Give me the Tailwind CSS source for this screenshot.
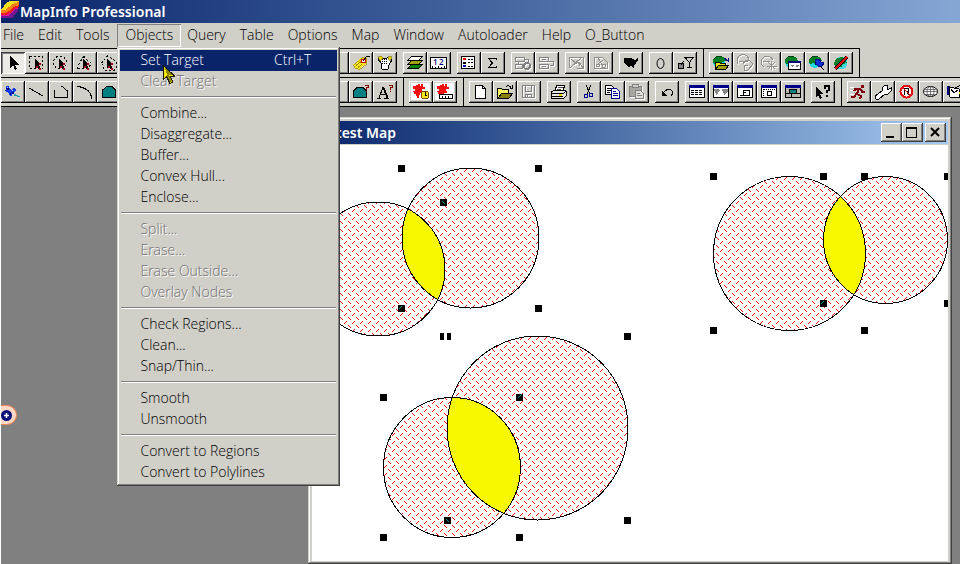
<!DOCTYPE html>
<html lang="en">
<head>
<meta charset="utf-8">
<title>MapInfo Professional</title>
<script src="https://cdn.jsdelivr.net/npm/@tailwindcss/browser@4"></script>
</head>
<body class="min-h-screen flex flex-col overflow-hidden border-l border-white bg-[#808080] font-['Open_Sans','Noto_Sans',sans-serif] text-[14px] text-black">

<header class="h-[23px] shrink-0 flex items-center gap-px bg-linear-to-r from-[#0a246a] to-[#86a6d4] text-white">
  <svg class="w-[18px] h-[18px] mb-1" viewBox="0 0 18 18" shape-rendering="crispEdges" aria-hidden="true">
    <path d="M0 9l3-3 3-4 4-2h8l-1 9-3 3-2 4H0z" fill="#e0109c"/>
    <path d="M0 8l3-3 3-4 4-1h8v2l-6 1-4 4-4 3H0z" fill="#f0e020"/>
    <path d="M0 9h4l4-3 3-3 7-2v3l-6 2-4 4-4 2H0z" fill="#f88010"/>
    <path d="M0 12h4l4-2 4-4 6-2v2l-5 2-4 4-4 2H0z" fill="#e81820"/>
    <path d="M0 15h6l3-1 4-5 5-2-1 3-3 3-2 4H0z" fill="#701890"/>
  </svg>
  <h1 class="font-['Noto_Sans',sans-serif] font-semibold leading-5">MapInfo Professional</h1>
</header>

<nav class="relative z-20 h-[25px] shrink-0 flex items-center gap-[14px] pl-[2px] bg-[#d0cfc8] font-light leading-5" aria-label="Main menu">
  <button class="pb-[2px]">File</button>
  <button class="pb-[2px]">Edit</button>
  <button class="pb-[2px]">Tools</button>
  <div class="relative -ml-[6px] -mr-2">
    <button class="h-[23px] px-2 pb-[2px] shadow-[inset_1px_1px_0_#808080,inset_-1px_-1px_0_#fff]" aria-haspopup="menu" aria-expanded="true">Objects</button>
    <div id="menu" role="menu" class="absolute left-0 top-[23px] w-[223px] p-[3px] bg-[#d0cfc8] shadow-[inset_-1px_-1px_0_#404040,inset_1px_1px_0_#d0cfc8,inset_-2px_-2px_0_#808080,inset_2px_2px_0_#fff] flex flex-col"></div>
    <svg class="absolute left-[46px] top-[41px] w-[12px] h-[20px]" viewBox="0 0 12 20" shape-rendering="crispEdges" aria-hidden="true">
      <path d="M.5 .5v14l3-3 3.500 7 3-1.500-3.500-6h5z" fill="#e8e010" stroke="#201c00"/>
      <path d="M2 3l7 7H6l3 6-2 1-3-6z" fill="#908800"/>
      <path d="M2 4v7l2-2z" fill="#f8f000"/>
    </svg>
  </div>
  <button class="pb-[2px]">Query</button>
  <button class="pb-[2px]">Table</button>
  <button class="pb-[2px]">Options</button>
  <button class="pb-[2px]">Map</button>
  <button class="pb-[2px]">Window</button>
  <button class="pb-[2px]">Autoloader</button>
  <button class="pb-[2px]">Help</button>
  <button class="pb-[2px]">O_Button</button>
</nav>

<section id="toolbars" class="shrink-0 bg-[#d0cfc8] border-b border-black" aria-label="Toolbars"></section>

<main class="relative flex-1 flex pt-[10px] pl-[307px] pr-2">
  <button class="absolute left-0 top-[298px] w-4 h-5 rounded-r-full border border-l-0 border-[#f08850] bg-[#fcd8c8] flex items-center" aria-label="Expand">
    <svg class="w-[11px] h-[11px]" viewBox="0 0 11 11" aria-hidden="true"><circle cx="5.500" cy="5.500" r="5.500" fill="#081078"/><path d="M3 5.500h5M5.500 3v5" stroke="#fff" stroke-width="1.500"/></svg>
  </button>

  <section class="flex-1 min-w-0 flex flex-col p-1 pb-[3px] bg-[#d0cfc8] shadow-[inset_-1px_-1px_0_#404040,inset_1px_1px_0_#d0cfc8,inset_-2px_-2px_0_#808080,inset_2px_2px_0_#fff]">
    <div class="h-[23px] shrink-0 flex items-center pl-6 pr-[2px] bg-linear-to-r from-[#0a246a] to-[#a6caf0] text-white">
      <h2 class="flex-1 font-['Noto_Sans',sans-serif] font-semibold leading-5">test Map</h2>
      <button class="w-[21px] h-[19px] bg-[#d0cfc8] shadow-[inset_-1px_-1px_0_#404040,inset_1px_1px_0_#fff,inset_-2px_-2px_0_#808080]" aria-label="Minimize"><svg class="w-[21px] h-[19px]" viewBox="0 0 21 19"><path d="M5 13h8v2H5z"/></svg></button>
      <button class="w-[21px] h-[19px] bg-[#d0cfc8] shadow-[inset_-1px_-1px_0_#404040,inset_1px_1px_0_#fff,inset_-2px_-2px_0_#808080]" aria-label="Maximize"><svg class="w-[21px] h-[19px]" viewBox="0 0 21 19"><path d="M4 4h11v11H4zM5 6v8h9V6z" fill-rule="evenodd"/></svg></button>
      <button class="ml-[2px] w-[21px] h-[19px] bg-[#d0cfc8] shadow-[inset_-1px_-1px_0_#404040,inset_1px_1px_0_#fff,inset_-2px_-2px_0_#808080]" aria-label="Close"><svg class="w-[21px] h-[19px]" viewBox="0 0 21 19"><path d="M6 5l8 8M14 5l-8 8" stroke="#000" stroke-width="2"/></svg></button>
    </div>
    <div class="mt-px flex-1 relative overflow-hidden bg-white">
      <svg class="absolute left-0 top-0 w-[636px] h-[416px]" viewBox="312 145 636 416" shape-rendering="crispEdges" role="img" aria-label="Map with three pairs of overlapping regions">
        <defs>
          <pattern id="hatch" width="8" height="8" patternUnits="userSpaceOnUse">
            <path d="M0 3h1v1h-1zM1 2h1v1h-1zM2 1h1v1h-1zM4 5h1v1h-1zM5 6h1v1h-1zM6 7h1v1h-1z" fill="#e00808"/>
          </pattern>
          <clipPath id="c1"><circle cx="378" cy="269" r="67"/></clipPath>
          <clipPath id="c4"><ellipse cx="452" cy="467.500" rx="68.500" ry="70"/></clipPath>
          <clipPath id="c5"><ellipse cx="789.500" cy="253.500" rx="76" ry="77"/></clipPath>
        </defs>
        <g fill="url(#hatch)">
          <circle cx="378" cy="269" r="67"/>
          <ellipse cx="470.500" cy="238" rx="68.500" ry="70"/>
          <ellipse cx="537.500" cy="428" rx="90.500" ry="92"/>
          <ellipse cx="452" cy="467.500" rx="68.500" ry="70"/>
          <ellipse cx="789.500" cy="253.500" rx="76" ry="77"/>
          <ellipse cx="885.500" cy="240" rx="62" ry="63.500"/>
        </g>
        <g fill="#f8f800">
          <ellipse cx="470.500" cy="238" rx="68.500" ry="70" clip-path="url(#c1)"/>
          <ellipse cx="537.500" cy="428" rx="90.500" ry="92" clip-path="url(#c4)"/>
          <ellipse cx="885.500" cy="240" rx="62" ry="63.500" clip-path="url(#c5)"/>
        </g>
        <g fill="none" stroke="#000">
          <circle cx="378" cy="269" r="67"/>
          <ellipse cx="470.500" cy="238" rx="68.500" ry="70"/>
          <ellipse cx="537.500" cy="428" rx="90.500" ry="92"/>
          <ellipse cx="452" cy="467.500" rx="68.500" ry="70"/>
          <ellipse cx="789.500" cy="253.500" rx="76" ry="77"/>
          <ellipse cx="885.500" cy="240" rx="62" ry="63.500"/>
        </g>
        <path d="M398 165h7v7h-7zM535 165h7v7h-7zM440 199h7v7h-7zM398 305h7v7h-7zM535 305h7v7h-7zM440 333h4v7h-4zM447 333h4v7h-4zM624 333h7v7h-7zM380 394h7v7h-7zM516 394h7v7h-7zM444 517h7v7h-7zM624 517h7v7h-7zM380 534h7v7h-7zM516 534h7v7h-7zM710 173h7v7h-7zM820 173h7v7h-7zM861 173h7v7h-7zM944 173h7v7h-7zM820 300h7v7h-7zM710 327h7v7h-7zM861 327h7v7h-7zM944 300h7v7h-7z"/>
        <path d="M442 201l3 3M402 306l-3 3M518 398l4-4M446 519l3 3M821 304l3-3" stroke="#10c8c8" stroke-width=".7"/>
      </svg>
    </div>
  </section>
</main>

<script>
const menu = [
  ['Set Target', 'active', 'Ctrl+T'], ['Clear Target', 'off'], null,
  ['Combine...'], ['Disaggregate...'], ['Buffer...'], ['Convex Hull...'], ['Enclose...'], null,
  ['Split...', 'off'], ['Erase...', 'off'], ['Erase Outside...', 'off'], ['Overlay Nodes', 'off'], null,
  ['Check Regions...'], ['Clean...'], ['Snap/Thin...'], null,
  ['Smooth'], ['Unsmooth'], null,
  ['Convert to Regions'], ['Convert to Polylines']
];
const look = {
  active: 'bg-[#0a246a] text-white',
  off: 'text-[#707070] [text-shadow:1px_1px_0_#fff]'
};
document.getElementById('menu').innerHTML = menu.map(m => m
  ? `<button role="menuitem" ${m[1] === 'off' ? 'disabled' : ''} class="h-[21px] flex items-center justify-between pl-5 pr-[26px] pb-[2px] whitespace-nowrap ${look[m[1]] || ''}"><span>${m[0]}</span>${m[2] ? `<span>${m[2]}</span>` : ''}</button>`
  : '<div role="separator" class="my-1 mx-px h-[3px] border-t border-[#808080] shadow-[inset_0_1px_0_#fff]"></div>').join('');

const cur = '<path d="M8 5v9l2-2 2 4 2-1-2-4h3z"/><path d="M9 12h2v2H9zM12 9h2v2h-2zM12 14h2v2h-2z" fill="#a00010"/>';
const dash = d => `<path d="${d}" fill="none" stroke="#000" stroke-dasharray="2 2"/>`;
const win = '<path d="M2.500 2.500h15v12h-15z" fill="#fff" stroke="#000"/><path d="M2 2h16v3H2z" fill="#000088"/>';
const globe = '<circle cx="8" cy="8" r="6" fill="#20d8e0"/><path d="M3 4l5-2 5 1 2 4-4 1-2 4-3-3-3 1-1-3z" fill="#008020"/><path d="M3 5l3-3h5" stroke="#004010" fill="none"/>';
const splash = '<path d="M0 0h19v17H0z" fill="#fff"/><path d="M2 3h3V2h2V1h2v2h1V1h2v3h2v2h-3v2h1v2H9v2H8v3H6v-2H5v-2H3V9H2V8h2V6H2z" fill="#f01010"/>';
const icons = {
  blank: '',
  pointer: '<path d="M7 2v12l3-3 2 5 2-1-2-4h4z"/>',
  marquee: dash('M2.500 2.500h13v12h-13z') + cur,
  radius: dash('M9 2a6.500 6.500 0 1 1-.1 0') + cur,
  boundary: dash('M9 2l3 4 4 3-2 5-12 1 3-7z') + cur,
  polysel: dash('M2.500 9l6-7 8 5 2 4-3 5h-10z') + cur,
  pin: '<path d="M3 3h3v2l2 2 3-2 2 2-1 2-2 1-1 3-2 0-1-3-3-1-1-2 1-1z" fill="#1038e8"/><path d="M3 5h3v2H4zM9 9h2v2H9zM7 10h1v2H7z" fill="#000080"/><path d="M11 11h2v1h2v1h2v1h-3v-1h-3z" fill="#20a0b0"/><path d="M4 4h1v1H4zM9 7h1v1H9z" fill="#80e0ff"/>',
  line: '<path d="M2 5l14 8" stroke="#000"/>',
  polyline: '<path d="M3.500 7v7.500h13V8l-6-5" stroke="#000" fill="none"/>',
  arc: '<path d="M2 3.500q13 1 15 12" stroke="#000" fill="none"/>',
  region: '<path d="M3.500 14.500V7l5-4h4l4 4v7.500z" fill="#008080" stroke="#000"/>',
  tag: '<path d="M2.500 10.500l8-7 5 1v5l-8 6-3-1z" fill="#f8e820" stroke="#a08000" stroke-width=".7"/><path d="M5 11.500l5-4M7 13.500l4-3" stroke="#b09000"/><circle cx="12.500" cy="7" r="2" fill="#fff" stroke="#c00"/><path d="M12 7l4-5 3 1" stroke="#000" fill="none"/>',
  drag: '<path d="M6 9L3 5l3-2 4 2 4-2 3 3-3 5-1 4H7z" fill="#fff" stroke="#000"/><path d="M3 3l3-1 2 2-3 3zM14 2l3 1-2 4-2-3z" fill="#e8d800" stroke="#605000" stroke-width=".5"/><path d="M7.500 5v5M9.500 5v5M11.500 5v5" stroke="#000" stroke-dasharray="1 1"/>',
  layers: '<path d="M2.500 14.500l4-4h11l-4 4z" fill="#008000" stroke="#000"/><path d="M2.500 10.500l4-4h11l-4 4z" fill="#a0a000" stroke="#000"/><path d="M2.500 6.500l4-4h11l-4 4z" fill="#fff" stroke="#000"/>',
  ruler: '<path d="M1.500 3.500h16v11h-16z" fill="#fff" stroke="#000"/><path d="M3.500 12v3M6.500 13v2M9.500 12v3M12.500 13v2M15.500 12v3" stroke="#000"/><text x="4" y="11" font-size="8" font-weight="600" fill="#000080">1</text><text x="10" y="11" font-size="8" font-weight="600" fill="#000080">2</text>',
  legend: '<path d="M2.500 2.500h13v12h-13z" fill="#fff" stroke="#000"/><path d="M4 4h3v2H4z" fill="#d00"/><path d="M4 8h3v2H4z"/><path d="M4 11h3v2H4z" fill="#00a"/><path d="M9 5.500h5M9 8.500h5M9 12.500h5" stroke="#000" stroke-dasharray="2 1"/>',
  sigma: '<path d="M13.500 6V4.500h-8L9.500 9l-4 4.500h8V12M6 5l4 4" fill="none" stroke="#000"/>',
  tables: '<path d="M2.500 3.500h9v4h-9zM2.500 10.500h7v4h-7zM11.500 5.500h4v3M5.500 8v2" fill="none" stroke="#808080"/><circle cx="14" cy="12" r="3" fill="none" stroke="#808080" stroke-width="2"/>',
  tables2: '<path d="M2.500 3.500h9v4h-9zM2.500 10.500h9v4h-9zM5 5.500h4M5 12.500h4M12 7.500h4v4h-3" fill="none" stroke="#808080"/>',
  clip: '<path d="M2.500 4v10M2 3.500h14v11h-6M3 14l11-10M6 11l6-3 4 6M4 5l5 4" fill="none" stroke="#909088"/><path d="M7 9a4 4 0 0 1 6 3" fill="none" stroke="#909088"/>',
  clipoff: '<path d="M3.500 14.500v-11h8l5 5v6zM7 4l5 8M12 6l-5 4" fill="none" stroke="#909088"/><circle cx="7" cy="11.500" r="1.500" fill="none" stroke="#909088"/><circle cx="13" cy="12" r="1.500" fill="none" stroke="#909088"/>',
  usa: '<path d="M3 4h7l2 1 2 1 2-2h1v2l-2 3-2 2v3h-1l-1-2H9l-1 2-2-3-3-2z"/>',
  o: '<ellipse cx="9.500" cy="9.500" rx="3.500" ry="5" fill="none" stroke="#000" shape-rendering="auto"/>',
  drink: '<path d="M10 3.500h8l-3.500 5zM14.500 8v6M12 13.500h5" fill="none" stroke="#000"/><path d="M3.500 9.500h5v5h-5z" fill="#888" stroke="#000"/><path d="M6 11l3-4" stroke="#000"/>',
  webopen: globe + '<path d="M4.500 8.500h4l1 1h5v5h-10z" fill="#f0e020" stroke="#000"/><path d="M4.500 15.500l3-4h10l-3 4z" fill="#a0a000" stroke="#000"/><path d="M13 4l4 3M17.500 4v4" stroke="#000080"/>',
  webgray: '<path d="M3 10a6 6 0 1 1 11-3M4 7h9M8 10l3-4h3l4 4-5 6H9v-5h4" fill="none" stroke="#909088"/>',
  webgray2: '<path d="M5 13a6 6 0 1 1 9-7M4 7h7" fill="none" stroke="#909088"/><path d="M9 8l7 7M16 8l-7 7M8 12h10M12.500 7v9" stroke="#909088"/>',
  webwin: globe + '<path d="M5.500 7.500h12v8h-12z" fill="#fff" stroke="#000"/><path d="M5 7h13v2H5z" fill="#000080"/><path d="M8 11h3l-1 3zM13 11h3l-2 3z" fill="#888"/>',
  webpin: globe + '<path d="M8 6l4-1 2 3 3 1-2 3-3 1-2-2-2-1z" fill="#1030d0" stroke="#000080"/><path d="M13 12l4 4" stroke="#000"/>',
  weboff: '<circle cx="10" cy="9" r="6.500" fill="#40d8e0"/><path d="M5 5l5-2 4 1 2 5-4 1-2 4-3-3-3 1-1-3z" fill="#108030"/><path d="M4 15L16 3" stroke="#000" stroke-width="4"/><path d="M4 15L16 3" stroke="#e01010" stroke-width="2.500"/>',
  regq: '<path d="M2.500 14.500V8l4-4h5l4 4v6.500z" fill="#008080" stroke="#000"/><path d="M14 2.500h3.500v2h-2V7M15.500 8v1" stroke="#800000" fill="none"/>',
  fontq: '<path d="M2 15.500h4M9 15.500h5M4 15L8 4l4 11M6 11.500h5" stroke="#000" fill="none"/><path d="M9 5l4 10" stroke="#000"/><path d="M14 2.500h3.500v2h-2V7M15.500 8v1" stroke="#800000" fill="none"/>',
  hot: splash + '<circle cx="14" cy="12" r="4" fill="#f8e820" stroke="#705000"/><path d="M14 9v3h2" stroke="#000" fill="none"/>',
  hotruler: splash + '<path d="M4.500 11.500h13v4h-13z" fill="#fff" stroke="#000"/><path d="M7.500 13v2M10.500 13v2M13.500 13v2" stroke="#000"/>',
  newdoc: '<path d="M4.500 2.500h7l3 3v10h-10z" fill="#fff" stroke="#000"/><path d="M11.500 3v2.500h3" stroke="#000" fill="none"/>',
  open: '<path d="M2.500 14.500v-9h4l1 1h6v3" fill="#f8f060" stroke="#000"/><path d="M3 15l4-5h11l-4 5z" fill="#888000" stroke="#000"/><path d="M11 4q3-3 5 1M17.500 2v3.500h-3" stroke="#000" fill="none"/>',
  save: '<path d="M3.500 2.500h12v12h-12zM6.500 2v6h6V2M6.500 15v-4h6v4M8.500 12v2" stroke="#808080" fill="none"/>',
  print: '<path d="M6 7l2-5h8l-2 5z" fill="#fff" stroke="#000"/><path d="M9 4.500h5M8 6.500h4" stroke="#000" stroke-width=".7"/><path d="M2.500 8.500l3-1h11l1 1v4l-3 3h-12z" fill="#e8e7e0" stroke="#000"/><path d="M2 10.500h12l3-2M3 13.500h11" stroke="#000" fill="none"/><path d="M10 11h3v2h-3z" fill="#e8d800"/>',
  cut: '<path d="M7 2l4 9M12 2l-4 9" stroke="#000"/><circle cx="7" cy="13" r="2" fill="none" stroke="#000090"/><circle cx="12" cy="12" r="2" fill="none" stroke="#000090"/>',
  copy: '<path d="M2.500 2.500h6l2 2v7h-8z" fill="#fff" stroke="#000"/><path d="M8.500 5.500h5l3 3v7h-8z" fill="#fff" stroke="#000090"/><path d="M4 5.500h4M4 7.500h4M4 9.500h3" stroke="#000"/><path d="M10 8.500h3M10 10.500h5M10 12.500h5" stroke="#000090"/>',
  paste: '<path d="M2.500 3.500h12v10h-12z" fill="#a8a8a0" stroke="#808080"/><path d="M5.500 1.500h6v3h-6z" fill="#d0cfc8" stroke="#808080"/><path d="M8.500 7.500h5l3 3v5h-8z" fill="#e0dfd8" stroke="#808080"/><path d="M10 10.500h3M10 12.500h5" stroke="#808080"/>',
  undo: '<path d="M6 10q4-5 8-3 3 3 0 6" stroke="#000" fill="none"/><path d="M5 8v5h5z"/>',
  browser: win + '<path d="M4 7.500h12M4 9.500h12M4 11.500h12" stroke="#000" stroke-dasharray="3 1"/>',
  mapwin: win + '<path d="M3 6h5l1 2-2 1-1 4-2-4zM11 6h6v3l-2 1-1 3-2-4z" fill="#888"/>',
  graph: win + '<path d="M5 12.500h3.500v-3h2M8.500 12.500v-5h6v5z" stroke="#000" fill="none"/>',
  layout: win + '<path d="M4.500 6v8M5 6.500h12" stroke="#000" stroke-dasharray="1 1"/><path d="M8.500 8.500h4v4h-4z" fill="#fff" stroke="#000"/>',
  redist: win + '<path d="M3 5h14v9H3z" fill="#b8b8b0"/><path d="M6.500 6.500h7v4h-7z" fill="#008080" stroke="#000"/><path d="M3 10.500h5v4M12.500 10.500h5" stroke="#000" fill="none"/>',
  help: '<path d="M3 4v10l2-2 2 4 2-1-2-4h3z"/><path d="M12 6V3h4v4l-2 1v2M14 12v2" stroke="#000" stroke-width="2" fill="none"/>',
  run: '<path d="M12 2h3v3h-3z" fill="#800010"/><path d="M6 5.500h5l2 3h3M10 6l-2 5 4 2-1 3M8 10l-3 4H2M7 5L5 8" stroke="#800010" stroke-width="2" fill="none"/><path d="M1 4.500h4M1 7.500h3M1 11.500h4" stroke="#fff"/>',
  wrench: '<path d="M2 13l7-5V5l3-3h2v4h2l2-1v3l-3 3h-3l-6 5H3z" fill="#fff" stroke="#000"/>',
  nopark: '<circle cx="9.500" cy="8.500" r="6" fill="#fff" stroke="#e01010" stroke-width="2"/><path d="M7.500 12V5.500h4v3h-3M10 8l2 4" stroke="#000" stroke-width="1.500" fill="none"/><path d="M5 4l9 9" stroke="#e01010"/>',
  grid: '<g shape-rendering="auto"><ellipse cx="9.500" cy="8.500" rx="7" ry="5" fill="#fff" stroke="#000"/><ellipse cx="9.500" cy="8.500" rx="3.500" ry="5" fill="none" stroke="#444" stroke-width=".7"/><path d="M2 8.500h15M3 6.500h13M3 11.500h13M9.500 3v11" stroke="#444" stroke-width=".7"/></g>',
  wizard: '<path d="M2 3h3v9H2z" fill="#000080"/><path d="M4 4l10 2v8H5z" fill="#fff" stroke="#000"/><path d="M6 6l3 4 4-3M10 5l6-3M7 14.500h8" stroke="#000" fill="none"/><path d="M16 6l1 3 3 1-3 1-1 3-1-3-3-1 3-1z" fill="#f8e820"/>'
};
const gray = ['tables', 'tables2', 'clip', 'clipoff', 'webgray', 'webgray2', 'save', 'paste'];

// '-' is a gap inside a toolbar; each array is one toolbar, closed by a rule on its right
const rows = [
  [['pointer','marquee','radius','boundary','polysel','blank','blank','blank','=','blank','blank','blank','blank','blank','blank','tag','drag','-','layers','ruler','-','legend','sigma','-','tables','tables2','-','clip','clipoff','-','usa','-','o','drink'],
   ['webopen','webgray','webgray2','webwin','webpin','weboff']],
  [['pin','line','polyline','arc','region','blank','blank','blank','=','blank','blank','blank','blank','blank','blank','regq','fontq'],
   ['hot','hotruler'],
   ['newdoc','open','save','-','print','-','cut','copy','paste','-','undo','-','browser','mapwin','graph','layout','redist','-','help'],
   ['run','wrench','nopark','grid','wizard']]
];
const btn = n => {
  if (n === '-') return '<span class="w-[6px] shrink-0"></span>';
  if (n === '=') return '<span class="w-3 shrink-0"></span>';
  const face = n === 'pointer'
    ? 'bg-[#ecebe6] shadow-[inset_1px_1px_0_#404040,inset_-1px_-1px_0_#fff,inset_2px_2px_0_#808080]'
    : 'bg-[#d0cfc8] shadow-[inset_-1px_-1px_0_#000,inset_1px_1px_0_#fff,inset_-2px_-2px_0_#808080]';
  const fx = gray.includes(n) ? 'drop-shadow-[1px_1px_0_#fff]' : '';
  return `<button aria-label="${n}" class="w-6 h-[22px] p-[2px] shrink-0 ${face}"><svg class="w-5 h-[18px] ${fx}" viewBox="0 0 20 18" shape-rendering="crispEdges">${icons[n]}</svg></button>`;
};
document.getElementById('toolbars').innerHTML = rows.map((r, i) =>
  `<div class="flex ${i ? '' : 'w-[859px]'}">` + r.map(t =>
    `<div role="toolbar" class="flex shrink-0 border-t border-r border-black pt-[3px] pb-[3px] pr-[6px] ${t === r[0] ? '' : 'pl-[5px]'}">${t.map(btn).join('')}</div>`).join('') + '</div>').join('');
</script>
</body>
</html>
